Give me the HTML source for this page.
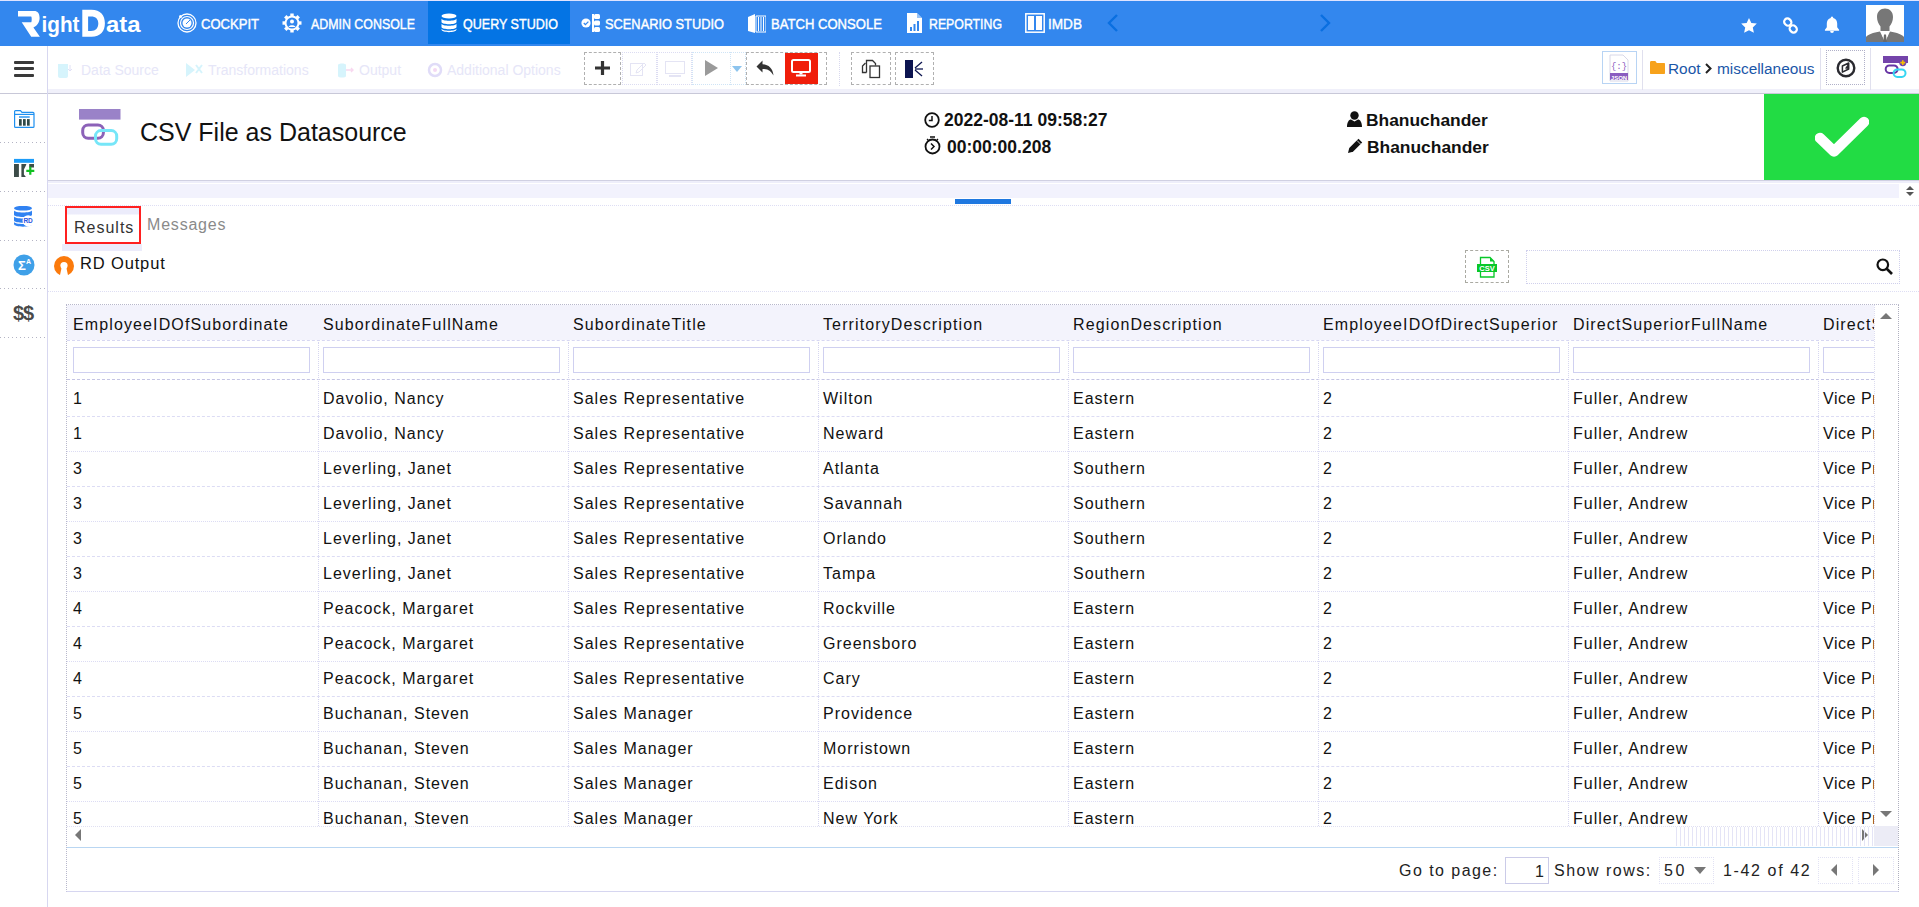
<!DOCTYPE html>
<html><head><meta charset="utf-8"><title>Query Studio</title><style>
*{box-sizing:border-box;margin:0;padding:0}
html,body{width:1919px;height:907px;overflow:hidden;background:#fff;font-family:"Liberation Sans",sans-serif;color:#111}
.a{position:absolute}
.nt{position:absolute;top:16px;color:#fff;font-size:14px;line-height:16px;white-space:nowrap;-webkit-text-stroke:0.4px #fff}
.dis{position:absolute;top:62px;color:#e6e6f8;font-size:14px;line-height:16px;white-space:nowrap}
.btn{position:absolute;top:52px;height:34px;border:1px solid #c4c4c4;background:#fff}
.sep{position:absolute;left:0;width:47px;height:1px;background:repeating-linear-gradient(90deg,#b4b4c4 0 1px,transparent 1px 4px)}
.gt{position:absolute;font-size:16px;line-height:18px;white-space:nowrap;letter-spacing:1px;color:#111}
.fi{position:absolute;height:26px;width:237px;border:1px solid #cfd0f0;background:#fff}
.vl{position:absolute;width:0;border-left:1px dotted #d6d6f0}
.hl{position:absolute;height:0;border-top:1px dashed #dcdcf4}
</style></head><body>
<div class="a" style="left:0;top:0;width:1919px;height:46px;background:#3387ee;border-top:1px solid #dfe3ff"></div>
<div class="a" style="left:428px;top:1px;width:142px;height:43px;background:#0474e4"></div>
<svg class="a" style="left:0;top:0" width="150" height="46" viewBox="0 0 150 46"><g fill="#fff"><path d="M18,10.9 L34.1,10.9 C37.7,10.9 39.6,13.5 39.6,17.9 C39.6,22.2 37,25.9 33.4,27.4 L39.9,36.8 L31.2,36.8 L21.7,22.2 L31.2,22.2 C31.9,21.5 31.9,17.1 31.2,16.4 L18,16.4 Z"/><path fill-rule="evenodd" d="M82.3,9.8 H91.5 C100.5,9.8 104.9,15.5 104.9,23.3 C104.9,31.1 100.5,36.8 91.5,36.8 H82.3 Z M88.1,16.4 H91 C95.8,16.4 98.3,19 98.3,23.5 C98.3,28 95.8,31 91,31 H88.1 Z"/><text x="41.5" y="31.8" font-family="Liberation Sans" font-weight="700" font-size="22" textLength="38" lengthAdjust="spacingAndGlyphs">ight</text><text x="106" y="32.1" font-family="Liberation Sans" font-weight="700" font-size="22" textLength="34.5" lengthAdjust="spacingAndGlyphs">ata</text></g></svg>
<div class="nt" style="left:201px;transform:scaleX(0.9325);transform-origin:0 0">COCKPIT</div>
<div class="nt" style="left:311px;transform:scaleX(0.8851);transform-origin:0 0">ADMIN CONSOLE</div>
<div class="nt" style="left:463px;transform:scaleX(0.8954);transform-origin:0 0">QUERY STUDIO</div>
<div class="nt" style="left:605px;transform:scaleX(0.9161);transform-origin:0 0">SCENARIO STUDIO</div>
<div class="nt" style="left:771px;transform:scaleX(0.9343);transform-origin:0 0">BATCH CONSOLE</div>
<div class="nt" style="left:929px;transform:scaleX(0.8795);transform-origin:0 0">REPORTING</div>
<div class="nt" style="left:1048px;transform:scaleX(0.9714);transform-origin:0 0">IMDB</div>
<svg class="a" style="left:177px;top:13px" width="20" height="20" viewBox="0 0 20 20"><circle cx="10" cy="10" r="9" fill="none" stroke="#fff" stroke-width="1.3"/><circle cx="10" cy="10" r="6.5" fill="none" stroke="#fff" stroke-width="1.2"/><circle cx="10" cy="10" r="4.5" fill="#fff"/><line x1="9" y1="11" x2="13" y2="7" stroke="#3387ee" stroke-width="1"/><circle cx="3.5" cy="3.5" r="1.5" fill="#fff"/></svg>
<svg class="a" style="left:282px;top:13px" width="20" height="20" viewBox="0 0 20 20"><g fill="#fff"><circle cx="10" cy="10" r="7.5"/><rect x="8.3" y="0.5" width="3.4" height="4" transform="rotate(0 10 10)"/><rect x="8.3" y="0.5" width="3.4" height="4" transform="rotate(45 10 10)"/><rect x="8.3" y="0.5" width="3.4" height="4" transform="rotate(90 10 10)"/><rect x="8.3" y="0.5" width="3.4" height="4" transform="rotate(135 10 10)"/><rect x="8.3" y="0.5" width="3.4" height="4" transform="rotate(180 10 10)"/><rect x="8.3" y="0.5" width="3.4" height="4" transform="rotate(225 10 10)"/><rect x="8.3" y="0.5" width="3.4" height="4" transform="rotate(270 10 10)"/><rect x="8.3" y="0.5" width="3.4" height="4" transform="rotate(315 10 10)"/></g><circle cx="10" cy="10" r="5.5" fill="#3387ee"/><circle cx="10" cy="8.5" r="2" fill="#fff"/><path d="M6.5 14c0.5-2.5 6.5-2.5 7 0z" fill="#fff"/></svg>
<svg class="a" style="left:441px;top:13px" width="16" height="20" viewBox="0 0 16 20"><g fill="#fff"><ellipse cx="8" cy="3" rx="7.5" ry="2.6"/><path d="M0.5 5.5c0 3 15 3 15 0v3.5c0 3-15 3-15 0z"/><path d="M0.5 10.5c0 3 15 3 15 0v3.5c0 3-15 3-15 0z"/><path d="M0.5 15.5c0 3 15 3 15 0v1c0 3.5-15 3.5-15 0z"/></g></svg>
<svg class="a" style="left:581px;top:13px" width="20" height="20" viewBox="0 0 20 20"><circle cx="5" cy="10" r="4.6" fill="#fff"/><path d="M2.8 10l1.6 1.6 3-3" stroke="#3387ee" stroke-width="1.3" fill="none"/><rect x="11" y="1" width="2" height="18" fill="#fff"/><rect x="13" y="1" width="6" height="5" rx="1.5" fill="#fff"/><rect x="13" y="7.5" width="6" height="5" rx="1.5" fill="#fff"/><rect x="13" y="14" width="6" height="5" rx="1.5" fill="#fff"/></svg>
<svg class="a" style="left:748px;top:13px" width="18" height="20" viewBox="0 0 18 20"><path d="M0 4 L7 1 V20 L0 18z" fill="#fff"/><path d="M8 3h10v16H8z" fill="none" stroke="#fff" stroke-width="1"/><g stroke="#fff" stroke-width="1"><line x1="10.5" y1="4" x2="10.5" y2="18"/><line x1="13" y1="4" x2="13" y2="18"/><line x1="15.5" y1="4" x2="15.5" y2="18"/></g></svg>
<svg class="a" style="left:907px;top:13px" width="15" height="20" viewBox="0 0 15 20"><path d="M0 0h10l5 5v15H0z" fill="#fff"/><path d="M10 0v5h5" fill="#3387ee" opacity="0.5"/><g fill="#3387ee"><rect x="3" y="14" width="2" height="4"/><rect x="6.5" y="11" width="2" height="7"/><rect x="10" y="8" width="2" height="10"/></g></svg>
<svg class="a" style="left:1025px;top:13px" width="20" height="20" viewBox="0 0 20 20"><rect x="0.8" y="0.8" width="18.4" height="18.4" fill="none" stroke="#fff" stroke-width="1.5"/><rect x="3" y="3" width="6" height="14" fill="#fff"/><rect x="11" y="3" width="6" height="14" fill="#fff"/></svg>
<svg class="a" style="left:1106px;top:14px" width="14" height="18" viewBox="0 0 14 18"><path d="M11 1 L3 9 L11 17" fill="none" stroke="#0a6fe0" stroke-width="2.4"/></svg>
<svg class="a" style="left:1318px;top:14px" width="14" height="18" viewBox="0 0 14 18"><path d="M3 1 L11 9 L3 17" fill="none" stroke="#0a6fe0" stroke-width="2.4"/></svg>
<svg class="a" style="left:1741px;top:18px" width="16" height="15" viewBox="0 0 24 23"><path d="M12 0l3.6 7.6 8.4 1-6.2 5.8 1.7 8.3L12 18.6 4.5 22.7l1.7-8.3L0 8.6l8.4-1z" fill="#fff"/></svg>
<svg class="a" style="left:1782px;top:17px" width="17" height="17" viewBox="0 0 17 17"><g fill="none" stroke="#fff" stroke-width="2.2"><rect x="2" y="1.8" width="7.5" height="6.5" rx="3.2" transform="rotate(45 5.75 5.05)"/><rect x="7.5" y="8.7" width="7.5" height="6.5" rx="3.2" transform="rotate(45 11.25 11.95)"/></g></svg>
<svg class="a" style="left:1824px;top:16px" width="16" height="17" viewBox="0 0 16 18"><path d="M8 0.5c1 0 1.3 0.8 1.3 1.5 2.8 0.7 4.2 3 4.2 6v4l2 2.5v1H0.5v-1l2-2.5v-4c0-3 1.4-5.3 4.2-6 0-0.7 0.3-1.5 1.3-1.5z" fill="#fff"/><path d="M6 16h4a2 2 0 0 1-4 0z" fill="#fff"/></svg>
<div class="a" style="left:1866px;top:5px;width:38px;height:37px;background:#fff"></div>
<svg class="a" style="left:1866px;top:5px" width="38" height="37" viewBox="0 0 38 37"><path d="M19 3.5c4.5 0 8 3 8 8.5 0 4-1.5 7-3.5 9.5v4.5h-9v-4.5C12.5 19 11 16 11 12c0-5.5 3.5-8.5 8-8.5z" fill="#777"/><path d="M0 37v-5c2-2.5 7-4.5 14-5.5l5 10.5 5-10.5c7 1 12 3 14 5.5v5z" fill="#777"/><path d="M15 26l4 4 4-4-3.5 11h-1z" fill="#fff"/><path d="M18 29.5h2l0.8 7.5h-3.6z" fill="#6a6a6a"/></svg>
<div class="a" style="left:48px;top:89px;width:1871px;height:4px;background:#f0f0fa"></div>
<div class="a" style="left:0;top:93px;width:1919px;height:1px;background:#c8c8d8"></div>
<div class="a" style="left:47px;top:46px;width:1px;height:861px;background:#d7d7f0"></div>
<div class="a" style="left:14px;top:61px;width:20px;height:3px;background:#3a3a3a;border-radius:1px"></div>
<div class="a" style="left:14px;top:67px;width:20px;height:3px;background:#3a3a3a;border-radius:1px"></div>
<div class="a" style="left:14px;top:74px;width:20px;height:3px;background:#3a3a3a;border-radius:1px"></div>
<div class="dis" style="left:81px">Data Source</div>
<div class="dis" style="left:208px">Transformations</div>
<div class="dis" style="left:359px">Output</div>
<div class="dis" style="left:447px">Additional Options</div>
<svg class="a" style="left:57px;top:62px" width="20" height="16" viewBox="0 0 20 16"><path d="M1 2h10v12c0 1-1 2-2 2H3c-1 0-2-1-2-2z" fill="#d6f4fc"/><path d="M13 3v6M11 7l2 2 2-2" stroke="#e0e0f6" stroke-width="1" fill="none"/></svg>
<svg class="a" style="left:186px;top:62px" width="18" height="16" viewBox="0 0 18 16"><path d="M0 1l9 7-9 7z" fill="#d6f4fc"/><path d="M10 3l6 8M16 3l-6 8" stroke="#d6f4fc" stroke-width="2"/></svg>
<svg class="a" style="left:337px;top:62px" width="18" height="16" viewBox="0 0 18 16"><path d="M1 3c0-2 8-2 8 0v11c0 2-8 2-8 0z" fill="#d6f4fc"/><path d="M9 8h7M14 6l2 2-2 2" stroke="#f8d8f0" stroke-width="1.4" fill="none"/></svg>
<svg class="a" style="left:427px;top:62px" width="16" height="16" viewBox="0 0 16 16"><circle cx="8" cy="8" r="6" fill="none" stroke="#e0dcf8" stroke-width="2.5"/><circle cx="8" cy="8" r="2" fill="#f4d8f4"/></svg>
<div class="a" style="left:584px;top:52px;width:37px;height:33px;border:1px dashed #b0b0b0"></div>
<div class="a" style="left:622px;top:52px;width:35px;height:33px;border:1px dotted #dcdcf2"></div>
<div class="a" style="left:657px;top:52px;width:35px;height:33px;border:1px dotted #dcdcf2"></div>
<div class="a" style="left:692px;top:52px;width:54px;height:33px;border:1px dotted #cfe4f6"></div>
<div class="a" style="left:730px;top:52px;width:0;height:33px;border-left:1px dotted #cfe4f6"></div>
<div class="a" style="left:746px;top:52px;width:81px;height:33px;border:1px dashed #b0b0b0"></div>
<div class="a" style="left:785px;top:53px;width:33px;height:31px;background:#f01e0a"></div>
<svg class="a" style="left:595px;top:61px" width="15" height="14" viewBox="0 0 15 14"><path d="M5.9 0h3.2v5.4H15v3.2H9.1V14H5.9V8.6H0V5.4h5.9z" fill="#333"/></svg>
<svg class="a" style="left:630px;top:61px" width="17" height="15" viewBox="0 0 17 15"><rect x="0.5" y="2.5" width="12" height="12" fill="none" stroke="#e4e4f4"/><path d="M7 9l7-7 2 2-7 7-3 1z" fill="none" stroke="#e4e4f4"/></svg>
<svg class="a" style="left:665px;top:61px" width="20" height="16" viewBox="0 0 20 16"><rect x="0.5" y="0.5" width="19" height="12" fill="none" stroke="#e4e4f4"/><rect x="4" y="14" width="12" height="2" fill="#e4e4f4"/></svg>
<svg class="a" style="left:705px;top:60px" width="13" height="16" viewBox="0 0 13 16"><path d="M0 0 L13 8 L0 16z" fill="#9a9a9a"/></svg>
<svg class="a" style="left:732px;top:66px" width="10" height="6" viewBox="0 0 10 6"><path d="M0 0h10L5 6z" fill="#8dc4ee"/></svg>
<svg class="a" style="left:756px;top:60px" width="18" height="16" viewBox="0 0 18 16"><path d="M6.5 0.5 L0.5 6.5 L6.5 12.5 V9 C11 9 14.5 10 17.5 15.5 C16.8 8.5 13 4.5 6.5 4.2z" fill="#333"/></svg>
<svg class="a" style="left:791px;top:59px" width="20" height="18" viewBox="0 0 20 18"><rect x="1" y="1" width="18" height="12" rx="1.5" fill="none" stroke="#fff" stroke-width="2"/><rect x="8.5" y="13" width="3" height="2.5" fill="#fff"/><rect x="5" y="15.5" width="10" height="2" fill="#fff"/></svg>
<div class="a" style="left:839px;top:52px;width:0;height:34px;border-left:1px dotted #d8d8ee"></div>
<div class="a" style="left:851px;top:52px;width:40px;height:33px;border:1px dashed #b0b0b0"></div>
<div class="a" style="left:895px;top:52px;width:39px;height:33px;border:1px dashed #b0b0b0"></div>
<svg class="a" style="left:861px;top:59px" width="20" height="20" viewBox="0 0 20 20"><path d="M5.5 13.5V1.5h6l3 3v2" fill="none" stroke="#333" stroke-width="1.3"/><path d="M5.5 13.5 H1.5 V7 l3-3" fill="none" stroke="#333" stroke-width="1.3"/><rect x="9" y="7" width="9.5" height="11.5" fill="#fff" stroke="#333" stroke-width="1.3"/></svg>
<svg class="a" style="left:904px;top:59px" width="20" height="20" viewBox="0 0 20 20"><rect x="1" y="1" width="8" height="18" fill="#0c1450"/><g stroke="#0c1450" stroke-width="1.3"><line x1="11" y1="10" x2="19" y2="10"/><line x1="11" y1="9" x2="18" y2="3"/><line x1="11" y1="11" x2="18" y2="17"/></g></svg>
<div class="a" style="left:1602px;top:51px;width:35px;height:33px;border:1px solid #b8d4f4"></div>
<svg class="a" style="left:1607px;top:54px" width="24" height="28" viewBox="0 0 24 28"><path d="M3 1h13l5 5v21H3z" fill="#fff" stroke="#d8d8e8"/><text x="12" y="15" font-size="9" text-anchor="middle" fill="#8a5cc0" font-family="Liberation Mono">{:}</text><rect x="3" y="19" width="18" height="7" fill="#8a5cc0"/><text x="12" y="25.5" font-size="6" text-anchor="middle" fill="#fff" font-family="Liberation Sans" font-weight="700">JSON</text></svg>
<div class="a" style="left:1642px;top:50px;width:1px;height:40px;background:#e0e0ee"></div>
<svg class="a" style="left:1650px;top:61px" width="15" height="13" viewBox="0 0 15 13"><path d="M0 1.5C0 0.7 0.5 0 1.3 0h4l1.5 2H14c0.6 0 1 0.4 1 1V12c0 0.6-0.4 1-1 1H1c-0.6 0-1-0.4-1-1z" fill="#f7a21b"/></svg>
<div class="a" style="left:1668px;top:60px;font-size:15.4px;line-height:17px;color:#1a56a8;white-space:nowrap">Root</div>
<svg class="a" style="left:1705px;top:63px" width="7" height="11" viewBox="0 0 7 11"><path d="M1 1l4.5 4.5L1 10" fill="none" stroke="#222" stroke-width="2"/></svg>
<div class="a" style="left:1717px;top:60px;font-size:15.4px;line-height:17px;color:#1a56a8;white-space:nowrap;letter-spacing:0px">miscellaneous</div>
<div class="a" style="left:1820px;top:48px;width:1px;height:42px;background:#e0e0ee"></div>
<div class="a" style="left:1826px;top:50px;width:39px;height:35px;border:1px dotted #b0b0c8"></div>
<svg class="a" style="left:1836px;top:58px" width="20" height="20" viewBox="0 0 20 20"><circle cx="10" cy="10" r="8.3" fill="none" stroke="#2a2a30" stroke-width="2.4"/><path d="M6.4 14.2V8L12.7 5V11z" fill="none" stroke="#2a2a30" stroke-width="1.5" stroke-linejoin="round"/><path d="M12.7 5V11L9 10.5z" fill="#2a2a30"/></svg>
<div class="a" style="left:1870px;top:48px;width:1px;height:42px;background:#e0e0ee"></div>
<svg class="a" style="left:1880px;top:55px" width="30" height="26" viewBox="0 0 30 26"><rect x="3" y="1" width="25" height="7" fill="#7444aa"/><circle cx="22.8" cy="7.6" r="3.6" fill="#7444aa"/><path d="M22.8 5.2v4.8M20.4 7.6h4.8" stroke="#f7c000" stroke-width="1.6"/><rect x="5.7" y="10.4" width="11.9" height="7.5" rx="3.7" fill="none" stroke="#6634a4" stroke-width="2"/><rect x="13.6" y="14.4" width="11.9" height="7.5" rx="3.7" fill="none" stroke="#36d6f2" stroke-width="2"/></svg>
<div class="sep" style="top:142px"></div>
<div class="sep" style="top:191px"></div>
<div class="sep" style="top:240px"></div>
<div class="sep" style="top:288px"></div>
<div class="sep" style="top:337px"></div>
<svg class="a" style="left:14px;top:110px" width="21" height="18" viewBox="0 0 21 18"><path d="M0.6 16.5V1.5Q0.6 0.6 1.5 0.6H6.5L8 2.4H19Q20 2.4 20 3.4V16.5Q20 17.4 19 17.4H1.5Q0.6 17.4 0.6 16.5z" fill="none" stroke="#1e90f0" stroke-width="1.2"/><path d="M0.6 4.4H20" stroke="#1e90f0" stroke-width="1.2"/><rect x="5" y="6.3" width="10.7" height="1.4" fill="#1e90f0"/><g fill="#2f4a48"><rect x="5" y="9.1" width="2.7" height="6.6"/><rect x="9" y="9.1" width="2.7" height="6.6"/><rect x="13" y="9.1" width="2.7" height="6.6"/></g></svg>
<svg class="a" style="left:14px;top:158px" width="21" height="20" viewBox="0 0 21 20"><rect x="0" y="0.9" width="20" height="3.9" fill="#1c9cf8"/><rect x="0" y="6" width="4.9" height="13" fill="#3c4c48"/><path d="M7.4 6h5l-0.5 1.5-2 4v5l2 2.5h-4.5z" fill="#3c4c48"/><rect x="15.2" y="6" width="4.8" height="3.5" fill="#3c4c48"/><path d="M16.3 16.8v-8M12.3 12.8h8" stroke="#10c020" stroke-width="2.2"/></svg>
<svg class="a" style="left:14px;top:206px" width="20" height="21" viewBox="0 0 20 21"><g fill="#3082f2"><ellipse cx="9" cy="2.2" rx="9" ry="2.4"/><path d="M0 4.2c0 3 18 3 18 0v4.6c0 3-18 3-18 0z"/><path d="M0 10.3c0 3 18 3 18 0v4.3c0 3-18 3-18 0z"/><path d="M0 15.8c0 3 18 3 18 0v2.2c0 3.5-18 3.5-18 0z"/></g><circle cx="14.1" cy="14.8" r="5.6" fill="#fff"/><text x="14.1" y="17.3" font-size="6.5" text-anchor="middle" fill="#2a56e0" font-family="Liberation Sans" font-weight="700">RD</text></svg>
<svg class="a" style="left:13px;top:254px" width="22" height="22" viewBox="0 0 22 22"><circle cx="11" cy="11" r="10.5" fill="#3fa0e8"/><text x="9" y="16" font-size="13" text-anchor="middle" fill="#fff" font-family="Liberation Sans" font-weight="700">Σ</text><text x="15.5" y="10" font-size="7" text-anchor="middle" fill="#fff" font-family="Liberation Sans" font-weight="700">A</text></svg>
<div class="a" style="left:13px;top:302px;font-size:20px;font-weight:700;color:#4a4a4a;line-height:22px;letter-spacing:-1px">$$</div>
<div class="a" style="left:48px;top:180px;width:1871px;height:1px;background:#d0d0e2"></div>
<div class="a" style="left:48px;top:181px;width:1871px;height:2px;background:#eeeefa"></div>
<svg class="a" style="left:78px;top:107px" width="46" height="44" viewBox="0 0 46 44"><rect x="1" y="2" width="41.5" height="10.6" fill="#9a82c8"/><rect x="4.7" y="17.9" width="20.7" height="13.3" rx="5.5" fill="none" stroke="#8c62b8" stroke-width="3"/><rect x="17.5" y="23.6" width="21.2" height="13.7" rx="5.5" fill="none" stroke="#76e6f8" stroke-width="3"/></svg>
<div class="a" style="left:140px;top:118px;font-size:25px;line-height:28px;color:#111;white-space:nowrap">CSV File as Datasource</div>
<svg class="a" style="left:924px;top:112px" width="16" height="16" viewBox="0 0 16 16"><circle cx="8" cy="8" r="6.8" fill="none" stroke="#111" stroke-width="1.8"/><path d="M8 4v4.5H4.8" fill="none" stroke="#111" stroke-width="1.5"/></svg>
<div class="a" style="left:944px;top:110px;font-size:17.5px;font-weight:700;line-height:20px;color:#111;white-space:nowrap">2022-08-11 09:58:27</div>
<svg class="a" style="left:924px;top:136px" width="17" height="19" viewBox="0 0 17 19"><circle cx="8.5" cy="10.5" r="7" fill="none" stroke="#111" stroke-width="1.8"/><path d="M7 7.5l3 3-3 3" fill="none" stroke="#111" stroke-width="1.5"/><path d="M6 1h5M3 3l2 2M14 3l-2 2" stroke="#111" stroke-width="1.3"/></svg>
<div class="a" style="left:947px;top:137px;font-size:17.5px;font-weight:700;line-height:20px;color:#111;white-space:nowrap">00:00:00.208</div>
<svg class="a" style="left:1347px;top:111px" width="15" height="16" viewBox="0 0 15 16"><circle cx="7.5" cy="4.5" r="4.2" fill="#111"/><path d="M0 16c0-5 2-7.5 4-7.5l3.5 2 3.5-2c2 0 4 2.5 4 7.5z" fill="#111"/></svg>
<div class="a" style="left:1366px;top:110px;font-size:17.4px;font-weight:700;line-height:20px;color:#111;white-space:nowrap">Bhanuchander</div>
<svg class="a" style="left:1347px;top:138px" width="16" height="16" viewBox="0 0 16 16"><path d="M11.5 0.8l3.7 3.7-9.5 9.5H2v-3.7z" fill="#111"/><path d="M1 15l1-4 3 3z" fill="#111"/><line x1="10" y1="2.5" x2="13.5" y2="6" stroke="#fff" stroke-width="0.8"/></svg>
<div class="a" style="left:1367px;top:137px;font-size:17.4px;font-weight:700;line-height:20px;color:#111;white-space:nowrap">Bhanuchander</div>
<div class="a" style="left:1764px;top:94px;width:155px;height:86px;background:#22dc44"></div>
<svg class="a" style="left:1815px;top:114px" width="54" height="44" viewBox="0 0 54 44"><path d="M5 24 L19 37.5 L49 8" fill="none" stroke="#fff" stroke-width="10.5" stroke-linecap="round" stroke-linejoin="round"/></svg>
<div class="a" style="left:48px;top:184px;width:1851px;height:14px;background:#f2f2fd"></div>
<svg class="a" style="left:1905px;top:185px" width="10" height="12" viewBox="0 0 10 12"><path d="M1 5L5 1L9 5z M1 7L5 11L9 7z" fill="#555"/></svg>
<div class="a" style="left:48px;top:205px;width:1871px;height:0;border-top:1px dotted #dedef4"></div>
<div class="a" style="left:955px;top:199px;width:56px;height:5px;background:#1f78e0"></div>
<div class="a" style="left:65px;top:206px;width:76px;height:38px;border:2px solid #ff2020;background:linear-gradient(#ececfb 0,#ececfb 6px,#fff 7px)"></div>
<div class="a" style="left:62px;top:244px;width:80px;height:7px;background:#ececfb"></div>
<div class="a" style="left:74px;top:219px;font-size:16px;line-height:18px;color:#333;letter-spacing:1.0px;white-space:nowrap">Results</div>
<div class="a" style="left:147px;top:216px;font-size:16px;line-height:18px;color:#8a8a8a;letter-spacing:0.8px;white-space:nowrap">Messages</div>
<svg class="a" style="left:54px;top:256px" width="20" height="20" viewBox="0 0 20 20"><circle cx="10" cy="10" r="10" fill="#fb7a0c"/><circle cx="10" cy="9.5" r="3.6" fill="#fff"/><path d="M8 10h4l2.2 10h-8.4z" fill="#fff"/></svg>
<div class="a" style="left:80px;top:254px;font-size:16.5px;line-height:18px;color:#111;letter-spacing:0.85px;white-space:nowrap">RD Output</div>
<div class="a" style="left:48px;top:291px;width:1871px;height:0;border-top:1px dotted #dedef4"></div>
<div class="a" style="left:1465px;top:250px;width:44px;height:33px;border:1px dashed #aaaaa2"></div>
<svg class="a" style="left:1476px;top:256px" width="22" height="22" viewBox="0 0 22 22"><path d="M4.5 1.5h9.5l4 4v15.5h-13.5z" fill="none" stroke="#08c828" stroke-width="1.3"/><path d="M14 1.5v4h4z" fill="#08c828"/><rect x="1" y="8" width="20" height="8" fill="#08c828"/><text x="11" y="14.8" font-size="7.5" text-anchor="middle" fill="#fff" font-family="Liberation Sans" font-weight="700">CSV</text></svg>
<div class="a" style="left:1526px;top:250px;width:374px;height:34px;border:1px dotted #d0d0ec"></div>
<svg class="a" style="left:1876px;top:258px" width="17" height="17" viewBox="0 0 17 17"><circle cx="6.8" cy="6.8" r="5.3" fill="none" stroke="#111" stroke-width="2.2"/><path d="M10.5 10.5L16 16" stroke="#111" stroke-width="2.6"/></svg>
<div class="a" style="left:66px;top:304px;width:1833px;height:588px;border:1px solid #d6d6f0;border-right:1px dotted #b0b0c0;border-left:1px dotted #b8b8cc;border-top:1px dotted #b8b8cc"></div>
<div class="a" style="left:67px;top:305px;width:1807px;height:35px;background:#f3f3fc"></div>
<div class="a" style="left:67px;top:340px;width:1807px;height:0;border-top:1px dashed #d6d6f2"></div>
<div class="a" style="left:67px;top:379px;width:1807px;height:0;border-top:1px dashed #c4c4e4"></div>
<div class="a" style="left:67px;top:305px;width:1807px;height:521px;overflow:hidden">
<div class="gt" style="left:6px;top:11px;letter-spacing:1.12px">EmployeeIDOfSubordinate</div>
<div class="fi" style="left:6px;top:42px"></div>
<div class="gt" style="left:256px;top:11px;letter-spacing:1.12px">SubordinateFullName</div>
<div class="fi" style="left:256px;top:42px"></div>
<div class="vl" style="left:251px;top:37px;height:490px"></div>
<div class="gt" style="left:506px;top:11px;letter-spacing:1.12px">SubordinateTitle</div>
<div class="fi" style="left:506px;top:42px"></div>
<div class="vl" style="left:501px;top:37px;height:490px"></div>
<div class="gt" style="left:756px;top:11px;letter-spacing:1.12px">TerritoryDescription</div>
<div class="fi" style="left:756px;top:42px"></div>
<div class="vl" style="left:751px;top:37px;height:490px"></div>
<div class="gt" style="left:1006px;top:11px;letter-spacing:1.12px">RegionDescription</div>
<div class="fi" style="left:1006px;top:42px"></div>
<div class="vl" style="left:1001px;top:37px;height:490px"></div>
<div class="gt" style="left:1256px;top:11px;letter-spacing:1.12px">EmployeeIDOfDirectSuperior</div>
<div class="fi" style="left:1256px;top:42px"></div>
<div class="vl" style="left:1251px;top:37px;height:490px"></div>
<div class="gt" style="left:1506px;top:11px;letter-spacing:1.12px">DirectSuperiorFullName</div>
<div class="fi" style="left:1506px;top:42px"></div>
<div class="vl" style="left:1501px;top:37px;height:490px"></div>
<div class="gt" style="left:1756px;top:11px;letter-spacing:1.12px">DirectSuperiorTitle</div>
<div class="fi" style="left:1756px;top:42px"></div>
<div class="vl" style="left:1751px;top:37px;height:490px"></div>
<div class="gt" style="left:6px;top:85px">1</div>
<div class="gt" style="left:256px;top:85px">Davolio, Nancy</div>
<div class="gt" style="left:506px;top:85px">Sales Representative</div>
<div class="gt" style="left:756px;top:85px">Wilton</div>
<div class="gt" style="left:1006px;top:85px">Eastern</div>
<div class="gt" style="left:1256px;top:85px">2</div>
<div class="gt" style="left:1506px;top:85px">Fuller, Andrew</div>
<div class="gt" style="left:1756px;top:85px;letter-spacing:0.55px">Vice President, Sales</div>
<div class="gt" style="left:6px;top:120px">1</div>
<div class="gt" style="left:256px;top:120px">Davolio, Nancy</div>
<div class="gt" style="left:506px;top:120px">Sales Representative</div>
<div class="gt" style="left:756px;top:120px">Neward</div>
<div class="gt" style="left:1006px;top:120px">Eastern</div>
<div class="gt" style="left:1256px;top:120px">2</div>
<div class="gt" style="left:1506px;top:120px">Fuller, Andrew</div>
<div class="gt" style="left:1756px;top:120px;letter-spacing:0.55px">Vice President, Sales</div>
<div class="hl" style="left:0;top:111px;width:1807px;border-top-style:dashed"></div>
<div class="gt" style="left:6px;top:155px">3</div>
<div class="gt" style="left:256px;top:155px">Leverling, Janet</div>
<div class="gt" style="left:506px;top:155px">Sales Representative</div>
<div class="gt" style="left:756px;top:155px">Atlanta</div>
<div class="gt" style="left:1006px;top:155px">Southern</div>
<div class="gt" style="left:1256px;top:155px">2</div>
<div class="gt" style="left:1506px;top:155px">Fuller, Andrew</div>
<div class="gt" style="left:1756px;top:155px;letter-spacing:0.55px">Vice President, Sales</div>
<div class="hl" style="left:0;top:146px;width:1807px;border-top-style:dotted"></div>
<div class="gt" style="left:6px;top:190px">3</div>
<div class="gt" style="left:256px;top:190px">Leverling, Janet</div>
<div class="gt" style="left:506px;top:190px">Sales Representative</div>
<div class="gt" style="left:756px;top:190px">Savannah</div>
<div class="gt" style="left:1006px;top:190px">Southern</div>
<div class="gt" style="left:1256px;top:190px">2</div>
<div class="gt" style="left:1506px;top:190px">Fuller, Andrew</div>
<div class="gt" style="left:1756px;top:190px;letter-spacing:0.55px">Vice President, Sales</div>
<div class="hl" style="left:0;top:181px;width:1807px;border-top-style:dashed"></div>
<div class="gt" style="left:6px;top:225px">3</div>
<div class="gt" style="left:256px;top:225px">Leverling, Janet</div>
<div class="gt" style="left:506px;top:225px">Sales Representative</div>
<div class="gt" style="left:756px;top:225px">Orlando</div>
<div class="gt" style="left:1006px;top:225px">Southern</div>
<div class="gt" style="left:1256px;top:225px">2</div>
<div class="gt" style="left:1506px;top:225px">Fuller, Andrew</div>
<div class="gt" style="left:1756px;top:225px;letter-spacing:0.55px">Vice President, Sales</div>
<div class="hl" style="left:0;top:216px;width:1807px;border-top-style:dotted"></div>
<div class="gt" style="left:6px;top:260px">3</div>
<div class="gt" style="left:256px;top:260px">Leverling, Janet</div>
<div class="gt" style="left:506px;top:260px">Sales Representative</div>
<div class="gt" style="left:756px;top:260px">Tampa</div>
<div class="gt" style="left:1006px;top:260px">Southern</div>
<div class="gt" style="left:1256px;top:260px">2</div>
<div class="gt" style="left:1506px;top:260px">Fuller, Andrew</div>
<div class="gt" style="left:1756px;top:260px;letter-spacing:0.55px">Vice President, Sales</div>
<div class="hl" style="left:0;top:251px;width:1807px;border-top-style:dashed"></div>
<div class="gt" style="left:6px;top:295px">4</div>
<div class="gt" style="left:256px;top:295px">Peacock, Margaret</div>
<div class="gt" style="left:506px;top:295px">Sales Representative</div>
<div class="gt" style="left:756px;top:295px">Rockville</div>
<div class="gt" style="left:1006px;top:295px">Eastern</div>
<div class="gt" style="left:1256px;top:295px">2</div>
<div class="gt" style="left:1506px;top:295px">Fuller, Andrew</div>
<div class="gt" style="left:1756px;top:295px;letter-spacing:0.55px">Vice President, Sales</div>
<div class="hl" style="left:0;top:286px;width:1807px;border-top-style:dotted"></div>
<div class="gt" style="left:6px;top:330px">4</div>
<div class="gt" style="left:256px;top:330px">Peacock, Margaret</div>
<div class="gt" style="left:506px;top:330px">Sales Representative</div>
<div class="gt" style="left:756px;top:330px">Greensboro</div>
<div class="gt" style="left:1006px;top:330px">Eastern</div>
<div class="gt" style="left:1256px;top:330px">2</div>
<div class="gt" style="left:1506px;top:330px">Fuller, Andrew</div>
<div class="gt" style="left:1756px;top:330px;letter-spacing:0.55px">Vice President, Sales</div>
<div class="hl" style="left:0;top:321px;width:1807px;border-top-style:dashed"></div>
<div class="gt" style="left:6px;top:365px">4</div>
<div class="gt" style="left:256px;top:365px">Peacock, Margaret</div>
<div class="gt" style="left:506px;top:365px">Sales Representative</div>
<div class="gt" style="left:756px;top:365px">Cary</div>
<div class="gt" style="left:1006px;top:365px">Eastern</div>
<div class="gt" style="left:1256px;top:365px">2</div>
<div class="gt" style="left:1506px;top:365px">Fuller, Andrew</div>
<div class="gt" style="left:1756px;top:365px;letter-spacing:0.55px">Vice President, Sales</div>
<div class="hl" style="left:0;top:356px;width:1807px;border-top-style:dotted"></div>
<div class="gt" style="left:6px;top:400px">5</div>
<div class="gt" style="left:256px;top:400px">Buchanan, Steven</div>
<div class="gt" style="left:506px;top:400px">Sales Manager</div>
<div class="gt" style="left:756px;top:400px">Providence</div>
<div class="gt" style="left:1006px;top:400px">Eastern</div>
<div class="gt" style="left:1256px;top:400px">2</div>
<div class="gt" style="left:1506px;top:400px">Fuller, Andrew</div>
<div class="gt" style="left:1756px;top:400px;letter-spacing:0.55px">Vice President, Sales</div>
<div class="hl" style="left:0;top:391px;width:1807px;border-top-style:dashed"></div>
<div class="gt" style="left:6px;top:435px">5</div>
<div class="gt" style="left:256px;top:435px">Buchanan, Steven</div>
<div class="gt" style="left:506px;top:435px">Sales Manager</div>
<div class="gt" style="left:756px;top:435px">Morristown</div>
<div class="gt" style="left:1006px;top:435px">Eastern</div>
<div class="gt" style="left:1256px;top:435px">2</div>
<div class="gt" style="left:1506px;top:435px">Fuller, Andrew</div>
<div class="gt" style="left:1756px;top:435px;letter-spacing:0.55px">Vice President, Sales</div>
<div class="hl" style="left:0;top:426px;width:1807px;border-top-style:dotted"></div>
<div class="gt" style="left:6px;top:470px">5</div>
<div class="gt" style="left:256px;top:470px">Buchanan, Steven</div>
<div class="gt" style="left:506px;top:470px">Sales Manager</div>
<div class="gt" style="left:756px;top:470px">Edison</div>
<div class="gt" style="left:1006px;top:470px">Eastern</div>
<div class="gt" style="left:1256px;top:470px">2</div>
<div class="gt" style="left:1506px;top:470px">Fuller, Andrew</div>
<div class="gt" style="left:1756px;top:470px;letter-spacing:0.55px">Vice President, Sales</div>
<div class="hl" style="left:0;top:461px;width:1807px;border-top-style:dashed"></div>
<div class="gt" style="left:6px;top:505px">5</div>
<div class="gt" style="left:256px;top:505px">Buchanan, Steven</div>
<div class="gt" style="left:506px;top:505px">Sales Manager</div>
<div class="gt" style="left:756px;top:505px">New York</div>
<div class="gt" style="left:1006px;top:505px">Eastern</div>
<div class="gt" style="left:1256px;top:505px">2</div>
<div class="gt" style="left:1506px;top:505px">Fuller, Andrew</div>
<div class="gt" style="left:1756px;top:505px;letter-spacing:0.55px">Vice President, Sales</div>
<div class="hl" style="left:0;top:496px;width:1807px;border-top-style:dotted"></div>
</div>
<div class="a" style="left:1874px;top:305px;width:24px;height:521px;background:#fff;border-left:1px dotted #dcdcf0"></div>
<svg class="a" style="left:1880px;top:312px" width="12" height="8" viewBox="0 0 12 8"><path d="M0 7L6 1L12 7z" fill="#777"/></svg>
<svg class="a" style="left:1880px;top:810px" width="12" height="8" viewBox="0 0 12 8"><path d="M0 1L6 7L12 1z" fill="#777"/></svg>
<div class="a" style="left:67px;top:826px;width:1807px;height:20px;background:#fff;border-top:1px dotted #e0e0f2"></div>
<svg class="a" style="left:74px;top:829px" width="8" height="12" viewBox="0 0 8 12"><path d="M7 0L1 6L7 12z" fill="#777"/></svg>
<svg class="a" style="left:1861px;top:829px" width="8" height="12" viewBox="0 0 8 12"><path d="M1 0L7 6L1 12z" fill="#777"/></svg>
<div class="a" style="left:1874px;top:826px;width:24px;height:20px;background:#ececf6"></div>
<div class="a" style="left:1676px;top:827px;width:198px;height:19px;background:repeating-linear-gradient(90deg,#e4e4f6 0 1px,transparent 1px 4px)"></div>
<div class="a" style="left:67px;top:847px;width:1831px;height:1px;background:#b9d6f2"></div>
<div class="a" style="left:1399px;top:862px;font-size:16px;line-height:18px;letter-spacing:1.45px;color:#222;white-space:nowrap">Go to page:</div>
<div class="a" style="left:1505px;top:857px;width:44px;height:27px;border:1px solid #cbcbe8"></div>
<div class="a" style="left:1535px;top:863px;font-size:16px;line-height:18px;color:#222">1</div>
<div class="a" style="left:1554px;top:862px;font-size:16px;line-height:18px;letter-spacing:1.5px;color:#222;white-space:nowrap">Show rows:</div>
<div class="a" style="left:1659px;top:857px;width:55px;height:27px;border:1px dotted #e2e2f4"></div>
<div class="a" style="left:1664px;top:862px;font-size:16px;line-height:18px;letter-spacing:2.6px;color:#222">50</div>
<svg class="a" style="left:1694px;top:867px" width="12" height="7" viewBox="0 0 12 7"><path d="M0 0h12L6 7z" fill="#777"/></svg>
<div class="a" style="left:1723px;top:862px;font-size:16px;line-height:18px;letter-spacing:1.63px;color:#222;white-space:nowrap">1-42 of 42</div>
<div class="a" style="left:1818px;top:857px;width:35px;height:27px;border:1px dotted #e2e2f4"></div>
<div class="a" style="left:1858px;top:857px;width:36px;height:27px;border:1px dotted #e2e2f4"></div>
<svg class="a" style="left:1830px;top:864px" width="8" height="12" viewBox="0 0 8 12"><path d="M7 0L1 6L7 12z" fill="#777"/></svg>
<svg class="a" style="left:1872px;top:864px" width="8" height="12" viewBox="0 0 8 12"><path d="M1 0L7 6L1 12z" fill="#777"/></svg>
</body></html>
